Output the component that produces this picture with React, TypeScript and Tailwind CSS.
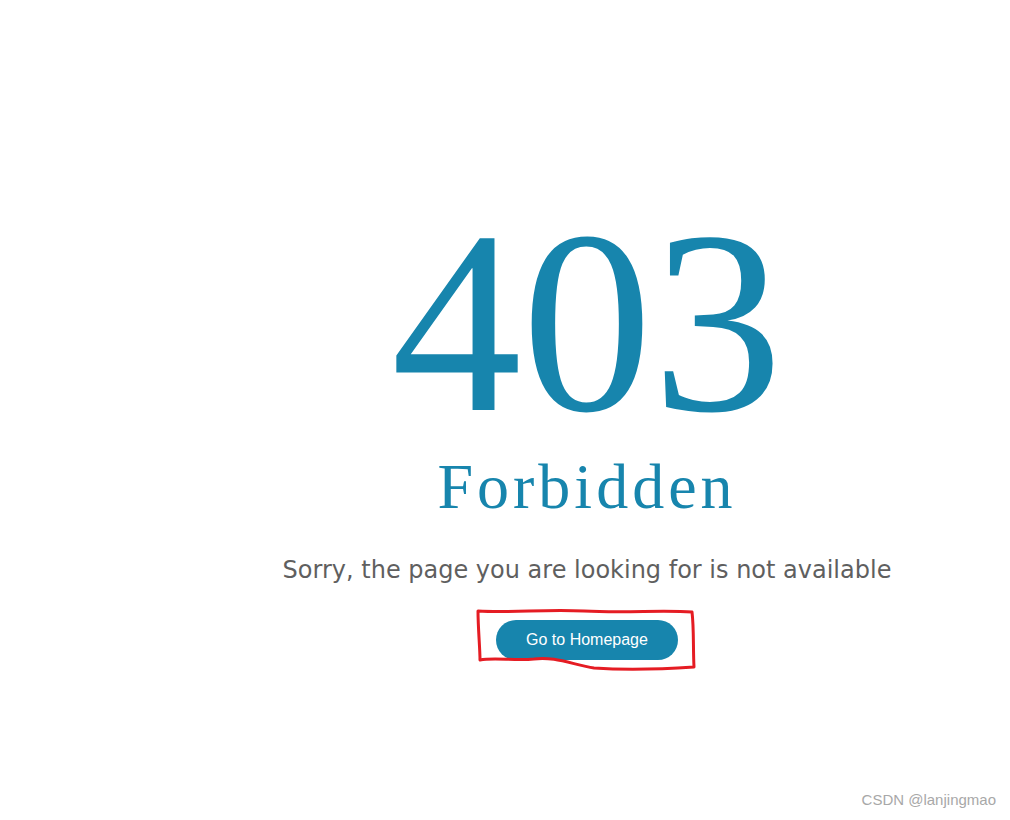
import React from "react";

export default function App() {
  return (
    <div className="relative w-[1010px] h-[820px] bg-white overflow-hidden">
      <div className="flex flex-col items-center pl-[164px] pt-[228px]">
        <div className="text-[#1785ad] leading-[0.72] text-[261px] font-['Liberation_Serif',serif]">
          403
        </div>
        <div className="text-[#1785ad] leading-[0.75] text-[64px] tracking-[4px] mt-[47px] font-['Liberation_Serif',serif]">
          Forbidden
        </div>
        <div className="text-[#5f5f5f] text-[24px] leading-none mt-[47px] font-['DejaVu_Sans',Verdana,sans-serif]">
          Sorry, the page you are looking for is not available
        </div>
        <div className="relative mt-[38px]">
          <button className="w-[182px] h-[40px] rounded-full bg-[#1785ad] text-white text-[16px] font-['Liberation_Sans',Arial,sans-serif]">
            Go to Homepage
          </button>
          <svg
            className="absolute left-[-22px] top-[-12px] pointer-events-none"
            width="226"
            height="66"
            viewBox="0 0 226 66"
            fill="none"
          >
            <path
              d="M4 3 C40 5 70 1 110 3 C150 5 190 2 218 4 C220 20 219 40 220 59 C190 61 150 62 120 60 C100 57 80 48 60 51 C40 53 20 49 6 52 C6 40 4 20 4 3 Z"
              stroke="#e51c23"
              strokeWidth="3"
              strokeLinejoin="round"
            />
          </svg>
        </div>
      </div>
      <div className="absolute right-[14px] bottom-[9px] text-[15px] text-[#a8a8a8] font-['Liberation_Sans',Arial,sans-serif]">
        CSDN @lanjingmao
      </div>
    </div>
  );
}
